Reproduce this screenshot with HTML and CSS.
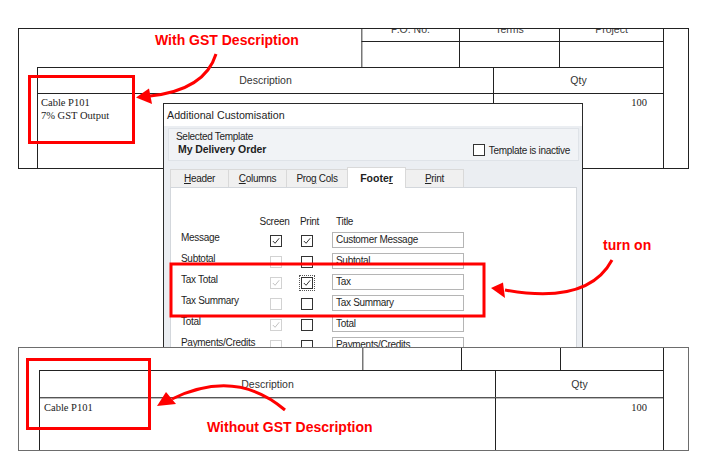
FILE: index.html
```html
<!DOCTYPE html>
<html lang="en">
<head>
    <meta charset="UTF-8">
    <title>GST Description - Tax Total</title>
    <link rel="stylesheet" href="styles.css">
</head>
<body>
<div class="page">

    <!-- before: printed with GST description -->
    <section class="doc doc-top">
        <div class="doc-main">
            <div class="doc-band">
                <div class="ref-grid">
                    <div class="ref-cell ref-head"><span>P.O. No.</span></div>
                    <div class="ref-cell ref-head"><span>Terms</span></div>
                    <div class="ref-cell ref-head"><span>Project</span></div>
                    <div class="ref-cell"></div>
                    <div class="ref-cell"></div>
                    <div class="ref-cell"></div>
                </div>
            </div>
            <div class="items">
                <div class="items-head">
                    <div class="col-desc">Description</div>
                    <div class="col-qty">Qty</div>
                </div>
                <div class="items-row">
                    <div class="col-desc print-text">Cable P101<br>7% GST Output</div>
                    <div class="col-qty print-text">100</div>
                </div>
            </div>
        </div>
        <div class="doc-side"></div>
    </section>

    <!-- after: printed without GST description -->
    <section class="doc doc-bottom">
        <div class="doc-main">
            <div class="doc-band">
                <div class="ref-grid single">
                    <div class="ref-cell"></div>
                    <div class="ref-cell"></div>
                    <div class="ref-cell"></div>
                </div>
            </div>
            <div class="items">
                <div class="items-head">
                    <div class="col-desc">Description</div>
                    <div class="col-qty">Qty</div>
                </div>
                <div class="items-row">
                    <div class="col-desc print-text">Cable P101</div>
                    <div class="col-qty print-text">100</div>
                </div>
            </div>
        </div>
        <div class="doc-side"></div>
    </section>

    <!-- dialog window -->
    <div class="dialog">
        <div class="dialog-title">Additional Customisation</div>
        <div class="dialog-body">
            <div class="template-box">
                <div class="template-info">
                    <div>Selected Template</div>
                    <div class="template-name">My Delivery Order</div>
                </div>
                <label class="inactive">
                    <span class="cb"></span>
                    Template is inactive
                </label>
            </div>

            <div class="tabs">
                <div class="tab"><u>H</u>eader</div>
                <div class="tab"><u>C</u>olumns</div>
                <div class="tab">Pro<u>g</u> Cols</div>
                <div class="tab active">Foote<u>r</u></div>
                <div class="tab"><u>P</u>rint</div>
            </div>

            <div class="panel">
                <div class="form-head">
                    <span class="h-screen">Screen</span>
                    <span class="h-print">Print</span>
                    <span class="h-title">Title</span>
                </div>

                <div class="form-row">
                    <span class="row-label">Message</span>
                    <span class="cb checked"><svg viewBox="0 0 11 11"><polyline points="2,5.5 4.5,8 9,2.5"/></svg></span>
                    <span class="cb checked print-cb"><svg viewBox="0 0 11 11"><polyline points="2,5.5 4.5,8 9,2.5"/></svg></span>
                    <span class="title-input">Customer Message</span>
                </div>
                <div class="form-row">
                    <span class="row-label">Subtotal</span>
                    <span class="cb disabled"></span>
                    <span class="cb print-cb"></span>
                    <span class="title-input">Subtotal</span>
                </div>
                <div class="form-row">
                    <span class="row-label">Tax Total</span>
                    <span class="cb disabled checked"><svg viewBox="0 0 11 11"><polyline points="2,5.5 4.5,8 9,2.5"/></svg></span>
                    <span class="cb checked print-cb focused"><svg viewBox="0 0 11 11"><polyline points="2,5.5 4.5,8 9,2.5"/></svg></span>
                    <span class="title-input">Tax</span>
                </div>
                <div class="form-row">
                    <span class="row-label">Tax Summary</span>
                    <span class="cb disabled"></span>
                    <span class="cb print-cb"></span>
                    <span class="title-input">Tax Summary</span>
                </div>
                <div class="form-row">
                    <span class="row-label">Total</span>
                    <span class="cb disabled checked"><svg viewBox="0 0 11 11"><polyline points="2,5.5 4.5,8 9,2.5"/></svg></span>
                    <span class="cb print-cb"></span>
                    <span class="title-input">Total</span>
                </div>
                <div class="form-row">
                    <span class="row-label">Payments/Credits</span>
                    <span class="cb disabled"></span>
                    <span class="cb print-cb"></span>
                    <span class="title-input">Payments/Credits</span>
                </div>
            </div>
        </div>
    </div>

    <!-- red annotations -->
    <svg class="marks" width="712" height="470" viewBox="0 0 712 470">
        <rect x="29.5" y="76.5" width="104" height="66"/>
        <rect x="171" y="264" width="313" height="52"/>
        <rect x="27.5" y="359.5" width="122" height="69"/>
        <path d="M216 54 Q205 90 150 96"/>
        <polygon points="136,97.5 149,88.5 152,104"/>
        <path d="M612 260 Q588 305 505 290"/>
        <polygon points="491,288 503,282.5 505,298"/>
        <path d="M285 410 Q236 368 172 399"/>
        <polygon points="157,406 166,392 176,404"/>
    </svg>
    <div class="note note-with">With GST Description</div>
    <div class="note note-turn">turn on</div>
    <div class="note note-without">Without GST Description</div>

</div>
</body>
</html>
```

FILE: styles.css
```css
body {
    margin: 0;
    background: #fff;
    font-family: "Liberation Sans", Arial, sans-serif;
}
.page {
    position: relative;
    width: 712px;
    height: 470px;
    overflow: hidden;
    background: #fff;
}

/* printed documents */
.doc {
    box-sizing: border-box;
    width: 671px;
    margin-left: 18px;
    display: flex;
    background: #fff;
    border: 1px solid #222;
}
.doc-top {
    margin-top: 28px;
    height: 141px;
}
.doc-bottom {
    position: relative;
    z-index: 2;
    margin-top: 178px;
    height: 104px;
    border-color: #6d6d6d;
}
.doc-main {
    flex: 1;
    display: flex;
    flex-direction: column;
}
.doc-side {
    width: 24px;
    border-left: 1px solid #222;
}
.doc-band {
    height: 38px;
    display: flex;
    justify-content: flex-end;
}
.doc-bottom .doc-band {
    height: 22px;
}
.ref-grid {
    width: 302px;
    display: grid;
    grid-template-columns: 98px 100px 104px;
    grid-template-rows: 13px 1fr;
}
.ref-grid.single {
    grid-template-columns: 99px 99px 104px;
    grid-template-rows: 1fr;
    width: 301px;
}
.ref-cell {
    box-sizing: border-box;
    border-left: 1px solid #222;
}
.ref-grid .ref-cell:first-child,
.ref-grid .ref-cell:nth-child(4) {
    border-left-color: #777;
    box-shadow: inset 1px 0 0 #bbb;
}
.ref-head {
    border-bottom: 1px solid #222;
    overflow: hidden;
    text-align: center;
    font-size: 10.5px;
    color: #444;
}
.ref-head span {
    display: block;
    margin-top: -6px;
    line-height: 12px;
}
.items {
    flex: 1;
    display: flex;
    flex-direction: column;
    margin-left: 18px;
    border-top: 1px solid #222;
    border-left: 1px solid #222;
}
.doc-bottom .items {
    margin-left: 20px;
}
.items-head,
.items-row {
    display: grid;
    grid-template-columns: 455px 1fr;
}
.items-head {
    height: 25px;
    border-bottom: 1px solid #222;
    font-size: 10.5px;
    color: #333;
    line-height: 25px;
    text-align: center;
}
.doc-bottom .items-head {
    height: 26px;
    line-height: 26px;
    border-bottom-color: #555;
    box-shadow: 0 1px 0 #bbb;
}
.items-row {
    flex: 1;
}
.col-qty {
    border-left: 1px solid #222;
}
.print-text {
    font-family: "Liberation Serif", "Times New Roman", serif;
    font-size: 10.5px;
    line-height: 13px;
    color: #222;
    padding-top: 2px;
}
.items-row .col-desc {
    padding-left: 3px;
}
.doc-bottom .items-row .col-desc {
    padding-left: 4px;
    padding-top: 3px;
}
.items-row .col-qty {
    text-align: right;
    padding-right: 16px;
}
.doc-bottom .items-row .col-qty {
    padding-top: 3px;
}

/* dialog window */
.dialog {
    position: absolute;
    z-index: 1;
    left: 163px;
    top: 103px;
    width: 420px;
    height: 270px;
    box-sizing: border-box;
    border: 1px solid #2a2a2a;
    background: #ebeef2;
    display: flex;
    flex-direction: column;
    font-size: 10px;
    letter-spacing: -0.3px;
    color: #1e1e1e;
}
.dialog-title {
    height: 22px;
    line-height: 22px;
    padding-left: 3px;
    background: #fff;
    font-size: 10.7px;
    letter-spacing: 0;
}
.dialog-body {
    flex: 1;
    display: flex;
    flex-direction: column;
    padding: 2px 3px 0 4px;
}
.template-box {
    height: 33px;
    box-sizing: border-box;
    border: 1px solid #dfe3e8;
    background: #f1f3f6;
    display: flex;
    align-items: flex-end;
    justify-content: space-between;
    padding: 0 8px 3px 7px;
}
.template-info {
    line-height: 13px;
    padding-bottom: 1px;
}
.template-name {
    font-weight: bold;
    font-size: 10.5px;
    letter-spacing: -0.1px;
    padding-left: 2px;
}
.inactive {
    display: flex;
    align-items: center;
    gap: 4px;
    padding-bottom: 1px;
}
.tabs {
    display: flex;
    align-items: flex-end;
    margin-top: 6px;
    padding-left: 2px;
    height: 20px;
}
.tab {
    box-sizing: border-box;
    width: 59px;
    height: 18px;
    line-height: 17px;
    text-align: center;
    background: #f0f0f0;
    border: 1px solid #d9d9d9;
    border-bottom: none;
    margin-right: -1px;
    color: #222;
}
.tab:first-child { width: 59px; }
.tab:nth-child(3) { width: 62px; }
.tab.active {
    position: relative;
    z-index: 1;
    height: 21px;
    margin-bottom: -1px;
    background: #fff;
    font-weight: bold;
    font-size: 10.5px;
    letter-spacing: 0;
    line-height: 20px;
}
.panel {
    flex: 1;
    margin: 0 2px 0 2px;
    background: #fff;
    border: 1px solid #d3d7dc;
    padding: 28px 0 0 10px;
}
.form-head {
    display: flex;
    height: 12px;
    line-height: 12px;
    margin-bottom: 4px;
}
.h-screen {
    margin-left: 78px;
    width: 31px;
    text-align: center;
}
.h-print {
    margin-left: 10px;
}
.h-title {
    margin-left: 17px;
}
.form-row {
    display: flex;
    align-items: flex-start;
    height: 21px;
}
.row-label {
    width: 89px;
    line-height: 12px;
    padding-top: 0;
}
.cb {
    box-sizing: border-box;
    width: 12px;
    height: 12px;
    border: 1px solid #333;
    background: #fff;
    display: inline-flex;
}
.form-row .cb {
    margin-top: 3px;
}
.cb svg {
    width: 10px;
    height: 10px;
}
.cb polyline {
    fill: none;
    stroke: #333;
    stroke-width: 1.1;
}
.cb.disabled {
    border-color: #d2d2d2;
}
.cb.disabled polyline {
    stroke: #c2c2c2;
}
.print-cb {
    margin-left: 19px;
}
.cb.focused {
    outline: 1px dotted #555;
    outline-offset: 1px;
}
.title-input {
    box-sizing: border-box;
    width: 132px;
    height: 16px;
    margin-left: 19px;
    border: 1px solid #b5b5b5;
    padding-left: 3px;
    line-height: 14px;
    white-space: nowrap;
    overflow: hidden;
}

/* annotations */
.marks {
    position: absolute;
    z-index: 5;
    left: 0;
    top: 0;
    pointer-events: none;
}
.marks rect,
.marks path {
    fill: none;
    stroke: #ff0000;
    stroke-width: 3;
}
.marks polygon {
    fill: #ff0000;
}
.note {
    position: absolute;
    z-index: 6;
    color: #ff0000;
    font-weight: bold;
    font-size: 14px;
    line-height: 16px;
    white-space: nowrap;
}
.note-with { left: 155px; top: 32px; }
.note-turn { left: 603px; top: 237px; }
.note-without { left: 207px; top: 419px; }
```
